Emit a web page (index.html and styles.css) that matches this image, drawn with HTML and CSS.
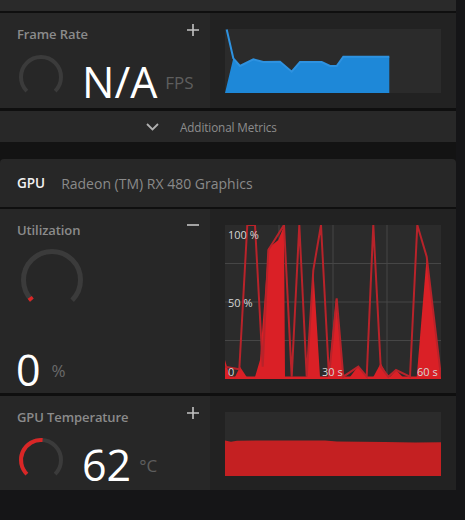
FILE: index.html
```html
<!DOCTYPE html>
<html>
<head>
<meta charset="utf-8">
<link rel="stylesheet" href="styles.css">
</head>
<body>
<div class="wrap">
  <div class="topcard"></div>
  <div class="sep s2"></div>

  <div class="row row-small">
    <div class="left">
      <div class="head">
        <span class="label">Frame Rate</span>
        <svg class="icon" width="12" height="12" viewBox="0 0 12 12"><path d="M6 0V12M0 6H12" /></svg>
      </div>
      <div class="body">
        <svg class="gauge" width="48" height="48" viewBox="0 0 48 48">
          <path class="track" d="M9.86 38.14A20 20 0 1 1 38.14 38.14" />
        </svg>
        <div class="readout">
          <span class="value">N/A</span>
          <span class="unit">FPS</span>
        </div>
      </div>
    </div>
    <div class="right">
      <svg class="plot" width="216" height="64" viewBox="0 0 216 64" preserveAspectRatio="none">
        <path class="blue-fill" d="M0 64L8.3 29.3L15 37L28.3 30.3L38.3 33L55 32.7L66.7 42.7L75 33L96.7 33L105 37L111.7 37L118.3 27.7L164.3 27.7L164.3 64Z" />
        <path class="blue-line" d="M1.7 0.5L8.3 29.3L15 37L28.3 30.3L38.3 33L55 32.7L66.7 42.7L75 33L96.7 33L105 37L111.7 37L118.3 27.7L164.3 27.7" />
      </svg>
    </div>
  </div>
  <div class="sep s3"></div>

  <div class="more">
    <svg class="chev" width="13" height="8" viewBox="0 0 13 8"><path d="M1 1L6.5 6.5L12 1" /></svg>
    <span class="more-text">Additional Metrics</span>
  </div>

  <div class="gap"></div>

  <div class="gpu-head">
    <span class="gpu">GPU</span>
    <span class="gpu-name">Radeon (TM) RX 480 Graphics</span>
  </div>
  <div class="sep s2"></div>

  <div class="row row-big">
    <div class="left">
      <div class="head">
        <span class="label">Utilization</span>
        <svg class="icon" width="12" height="12" viewBox="0 0 12 12"><path d="M0 5H12" /></svg>
      </div>
      <svg class="gauge gauge-big" width="70" height="70" viewBox="0 0 70 70">
        <path class="track wide" d="M14.85 55.15A28.5 28.5 0 1 1 55.15 55.15" />
        <path class="red wide" d="M14.85 55.15A28.5 28.5 0 0 1 12.7 52.4" />
      </svg>
      <div class="readout bottom">
        <span class="value">0</span>
        <span class="unit">%</span>
      </div>
    </div>
    <div class="right">
      <svg class="plot" width="216" height="154" viewBox="0 0 216 154" preserveAspectRatio="none">
        <g class="grid">
          <path d="M0 38.5H216M0 77H216M0 115.5H216M54 0V154M108 0V154M162 0V154" />
        </g>
        <g class="red-fill">
          <path d="M0 135L5 152L0 152Z" />
          <path d="M10 152L15 141.7L21.7 152Z" />
          <path d="M30 152L35 135L43.3 23.3L53.3 15L59 1L60 152Z" />
          <path d="M81.7 152L88.3 43.3L95 152Z" />
          <path d="M103.3 152L111 73.3L118.3 152Z" />
          <path d="M125 152L133.3 141L141.7 152Z" />
          <path d="M148.3 152L155.7 138.3L163.3 152Z" />
          <path d="M165 152L171 145L177.7 152Z" />
          <path d="M191.7 152L201.7 31.7L216 150L216 152Z" />
          <rect x="0" y="151.5" width="216" height="2.5" />
        </g>
        <path class="red-line" d="M0 141.7L14.3 144.3L22.3 0L30 0L37.7 141.7L43.3 25L59 0L66.7 151.7L74.3 0L81.7 151.7L88.3 45L96 0L104 151.7L111.7 73.3L118.3 151.7L133.3 141.7L141.7 151.7L148.3 0L155.7 141.7L163.3 151.7L171 145L185 151.7L192.3 0L201.7 31.7L216 151.7" />
        <g class="axis">
          <text x="3" y="14">100 %</text>
          <text x="3" y="82">50 %</text>
          <text x="3" y="151">0</text>
          <text x="97" y="151">30 s</text>
          <text x="192" y="151">60 s</text>
        </g>
      </svg>
    </div>
  </div>
  <div class="sep s3"></div>

  <div class="row row-temp">
    <div class="left">
      <div class="head">
        <span class="label">GPU Temperature</span>
        <svg class="icon" width="12" height="12" viewBox="0 0 12 12"><path d="M6 0V12M0 6H12" /></svg>
      </div>
      <div class="body">
        <svg class="gauge" width="48" height="48" viewBox="0 0 48 48">
          <path class="track" d="M9.86 38.14A20 20 0 1 1 38.14 38.14" />
          <path class="red" d="M9.86 38.14A20 20 0 0 1 25.57 4.06" />
        </svg>
        <div class="readout">
          <span class="value">62</span>
          <span class="unit">°C</span>
        </div>
      </div>
    </div>
    <div class="right">
      <svg class="plot" width="216" height="64" viewBox="0 0 216 64" preserveAspectRatio="none">
        <path class="temp-fill" d="M0 28.5L6 29.8L12 28.8L40 28.4L100 28.6L112 29.5L160 30L190 30.6L216 30.2L216 64L0 64Z" />
      </svg>
    </div>
  </div>
</div>
</body>
</html>
```

FILE: styles.css
```css
html, body {
  margin: 0;
  padding: 0;
}
body {
  width: 465px;
  height: 520px;
  overflow: hidden;
  background: #151517;
  font-family: "Open Sans", "Noto Sans", sans-serif;
  color: #8b8b8b;
}
.wrap {
  width: 456px;
  background: #131313;
}
.topcard {
  height: 11px;
  background: #2a2a2a;
}
.sep { background: #0f0f0f; }
.s2 { height: 2px; }
.s3 { height: 3px; }

.row {
  display: flex;
}
.row-small { height: 95px; }
.row-big { height: 184px; }
.row-temp { height: 94px; }

.left {
  width: 210px;
  box-sizing: border-box;
  padding: 11px 11px 0 17px;
  background: #272727;
  display: flex;
  flex-direction: column;
}
.right {
  flex: 1;
  background: #222222;
  padding: 16px 15px 0 15px;
}
.plot {
  display: block;
  background: #2b2b2b;
}

.head {
  display: flex;
  justify-content: space-between;
  align-items: center;
  height: 20px;
}
.label {
  font-size: 13px;
  font-weight: 600;
  color: #8b8b8b;
  letter-spacing: -0.1px;
}
.icon {
  align-self: flex-start;
  fill: none;
  stroke: #c4c4c4;
  stroke-width: 1.6;
}

.body {
  display: flex;
  align-items: center;
  margin-top: 6px;
}
.gauge {
  display: block;
  fill: none;
}
.gauge .track {
  stroke: #3b3b3b;
  stroke-width: 4;
}
.gauge .red {
  stroke: #d92626;
  stroke-width: 4;
}
.gauge .wide {
  stroke-width: 5;
}
.gauge-big {
  margin-top: 5px;
}

.readout {
  display: flex;
  align-items: center;
  margin-left: 17px;
  margin-top: 10px;
}
.readout.bottom {
  margin: auto 0 1px -1px;
}
.value {
  font-size: 43px;
  line-height: 44px;
  font-weight: 400;
  color: #ffffff;
}
.unit {
  font-size: 17px;
  line-height: 17px;
  color: #5e5e5e;
  margin-left: 8px;
}
.readout.bottom .unit {
  margin-left: 11px;
  color: #6a6a6a;
}

.more {
  height: 31px;
  background: #282828;
  display: flex;
  align-items: center;
  padding-left: 146px;
}
.chev {
  fill: none;
  stroke: #b0b0b0;
  stroke-width: 1.8;
}
.more-text {
  margin-left: 21px;
  font-size: 11.7px;
  color: #8d8d8d;
  letter-spacing: -0.1px;
}

.gap {
  height: 17px;
  background: #131313;
}

.gpu-head {
  height: 48px;
  background: #272727;
  border-radius: 4px 4px 0 0;
  display: flex;
  align-items: center;
  padding-left: 17px;
}
.gpu {
  font-size: 13.5px;
  font-weight: 600;
  color: #f2f2f2;
}
.gpu-name {
  margin-left: 16px;
  font-size: 14px;
  color: #8a8a8a;
}

.blue-fill { fill: #1e88d8; }
.blue-line {
  fill: none;
  stroke: #2e92e0;
  stroke-width: 2;
}
.grid path {
  stroke: #464646;
  stroke-width: 1;
  fill: none;
}
.red-fill { fill: #da2026; }
.red-line {
  fill: none;
  stroke: #b8232a;
  stroke-width: 2;
  stroke-linejoin: miter;
}
.axis text {
  font-family: "Open Sans", sans-serif;
  font-size: 11px;
  fill: #d6d6d6;
}
.temp-fill { fill: #c42022; }
```
